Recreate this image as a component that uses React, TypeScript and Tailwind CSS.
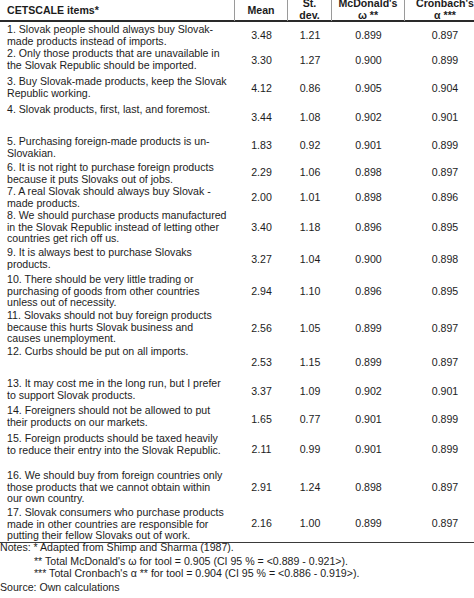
import React from "react";

type Row = { lines: string[]; vals: string[]; h: number; off: number };

const rows: Row[] = [
  { lines: ["1. Slovak people should always buy Slovak-", "made products instead of imports."], vals: ["3.48", "1.21", "0.899", "0.897"], h: 24, off: 6 },
  { lines: ["2. Only those products that are unavailable in", "the Slovak Republic should be imported."], vals: ["3.30", "1.27", "0.900", "0.899"], h: 28, off: 7 },
  { lines: ["3. Buy Slovak-made products, keep the Slovak", "Republic working."], vals: ["4.12", "0.86", "0.905", "0.904"], h: 28, off: 7 },
  { lines: ["4. Slovak products, first, last, and foremost."], vals: ["3.44", "1.08", "0.902", "0.901"], h: 32, off: 8 },
  { lines: ["5. Purchasing foreign-made products is un-", "Slovakian."], vals: ["1.83", "0.92", "0.901", "0.899"], h: 26, off: 4 },
  { lines: ["6. It is not right to purchase foreign products", "because it puts Slovaks out of jobs."], vals: ["2.29", "1.06", "0.898", "0.897"], h: 24, off: 5 },
  { lines: ["7. A real Slovak should always buy Slovak -", "made products."], vals: ["2.00", "1.01", "0.898", "0.896"], h: 24, off: 6 },
  { lines: ["8. We should purchase products manufactured", "in the Slovak Republic instead of letting other", "countries get rich off us."], vals: ["3.40", "1.18", "0.896", "0.895"], h: 37, off: 12 },
  { lines: ["9. It is always best to purchase Slovaks", "products."], vals: ["3.27", "1.04", "0.900", "0.898"], h: 27, off: 7 },
  { lines: ["10. There should be very little trading or", "purchasing of goods from other countries", "unless out of necessity."], vals: ["2.94", "1.10", "0.896", "0.895"], h: 36, off: 12 },
  { lines: ["11. Slovaks should not buy foreign products", "because this hurts Slovak business and", "causes unemployment."], vals: ["2.56", "1.05", "0.899", "0.897"], h: 36, off: 13 },
  { lines: ["12. Curbs should be put on all imports."], vals: ["2.53", "1.15", "0.899", "0.897"], h: 32, off: 11 },
  { lines: ["13. It may cost me in the long run, but I prefer", "to support Slovak products."], vals: ["3.37", "1.09", "0.902", "0.901"], h: 27, off: 8 },
  { lines: ["14. Foreigners should not be allowed to put", "their products on our markets."], vals: ["1.65", "0.77", "0.901", "0.899"], h: 28, off: 9 },
  { lines: ["15. Foreign products should be taxed heavily", "to reduce their entry into the Slovak Republic."], vals: ["2.11", "0.99", "0.901", "0.899"], h: 37, off: 11 },
  { lines: ["16. We should buy from foreign countries only", "those products that we cannot obtain within", "our own country."], vals: ["2.91", "1.24", "0.898", "0.897"], h: 37, off: 12 },
  { lines: ["17. Slovak consumers who purchase products", "made in other countries are responsible for", "putting their fellow Slovaks out of work."], vals: ["2.16", "1.00", "0.899", "0.897"], h: 35, off: 11 },
];

export default function App() {
  return (
    <div
      className="w-[474px] h-[598px] overflow-hidden bg-white text-[#1c1c1c] text-[10.6px] leading-[11.7px]"
      style={{ fontFamily: '"Liberation Sans", Arial, sans-serif' }}
    >
      <div className="w-[485px]">
        {/* header */}
        <div className="grid grid-cols-[235px_53px_44px_73px_80px] h-[22px] border-b-2 border-[#2a2a2a] font-bold">
          <div className="border-r border-[#9a9a9a] pl-[7px] pt-[4px] leading-[12px]">CETSCALE items*</div>
          <div className="border-r border-[#9a9a9a] text-center pt-[4px] leading-[12px]">Mean</div>
          <div className="border-r border-[#9a9a9a] text-center leading-[12px] pt-[0px]">
            <div className="-mt-[3px]">St.</div>
            <div>dev.</div>
          </div>
          <div className="border-r border-[#9a9a9a] text-center leading-[12px]">
            <div className="-mt-[3px]">McDonald's</div>
            <div>ω **</div>
          </div>
          <div className="text-center leading-[12px]">
            <div className="-mt-[3px]">Cronbach's</div>
            <div>α ***</div>
          </div>
        </div>
        {/* body */}
        <div className="pt-[2px] border-b border-[#3a3a3a]">
          {rows.map((r, i) => (
            <div key={i} className="grid grid-cols-[235px_53px_44px_73px_80px]" style={{ height: r.h }}>
              <div className="pl-[7px] whitespace-nowrap">
                {r.lines.map((l, j) => (
                  <div key={j}>{l}</div>
                ))}
              </div>
              {r.vals.map((v, j) => (
                <div key={j} className="text-center" style={{ paddingTop: r.off }}>
                  {v}
                </div>
              ))}
            </div>
          ))}
        </div>
        {/* notes */}
        <div className="leading-[9px] whitespace-nowrap">
          <div className="mt-[0px]">Notes: * Adapted from Shimp and Sharma (1987).</div>
          <div className="pl-[34px] mt-[4.5px]">** Total McDonald's ω for tool = 0.905 (CI 95 % = &lt;0.889 - 0.921&gt;).</div>
          <div className="pl-[34px] mt-[3px]">*** Total Cronbach's α ** for tool = 0.904 (CI 95 % = &lt;0.886 - 0.919&gt;).</div>
          <div className="mt-[5px]">Source: Own calculations</div>
        </div>
      </div>
    </div>
  );
}
